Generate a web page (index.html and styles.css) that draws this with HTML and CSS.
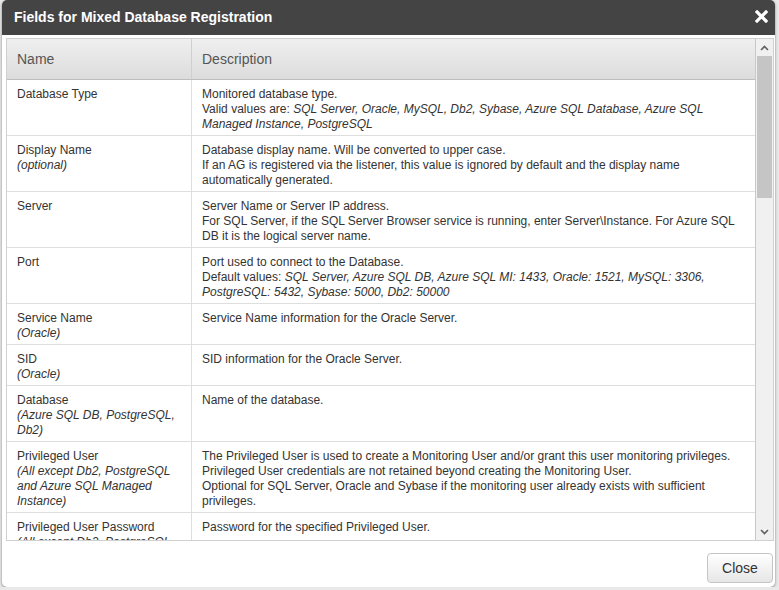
FILE: index.html
```html
<!DOCTYPE html>
<html>
  <head>
    <meta charset="utf-8" />
    <title>Fields for Mixed Database Registration</title>
    <link rel="stylesheet" href="styles.css">
  </head>
  <body>
    <div class="dialog">
      <div class="titlebar">
        <span class="title">Fields for Mixed Database Registration</span>
        <span class="close-x">
          <svg width="13" height="13" viewBox="0 0 13 13">
            <path d="M2 2 L11 11 M11 2 L2 11" stroke="#fff" stroke-width="3.2" stroke-linecap="square" />
          </svg>
        </span>
      </div>
      <div class="body">
        <div class="scroller">
          <div class="viewport">
            <table class="fields">
              <tr>
                <th class="col-name">Name</th>
                <th>Description</th>
              </tr>
              <tr>
                <td>Database Type</td>
                <td>Monitored database type.<br />Valid values are: <i>SQL Server, Oracle, MySQL, Db2, Sybase, Azure SQL Database, Azure SQL Managed Instance, PostgreSQL</i></td>
              </tr>
              <tr>
                <td>Display Name<br /><i>(optional)</i></td>
                <td>Database display name. Will be converted to upper case.<br />If an AG is registered via the listener, this value is ignored by default and the display name automatically generated.</td>
              </tr>
              <tr>
                <td>Server</td>
                <td>Server Name or Server IP address.<br />For SQL Server, if the SQL Server Browser service is running, enter Server\Instance. For Azure SQL DB it is the logical server name.</td>
              </tr>
              <tr>
                <td>Port</td>
                <td>Port used to connect to the Database.<br />Default values: <i>SQL Server, Azure SQL DB, Azure SQL MI: 1433, Oracle: 1521, MySQL: 3306, PostgreSQL: 5432, Sybase: 5000, Db2: 50000</i></td>
              </tr>
              <tr>
                <td>Service Name<br /><i>(Oracle)</i></td>
                <td>Service Name information for the Oracle Server.</td>
              </tr>
              <tr>
                <td>SID<br /><i>(Oracle)</i></td>
                <td>SID information for the Oracle Server.</td>
              </tr>
              <tr>
                <td>Database<br /><i>(Azure SQL DB, PostgreSQL, Db2)</i></td>
                <td>Name of the database.</td>
              </tr>
              <tr>
                <td>Privileged User<br /><i>(All except Db2, PostgreSQL and Azure SQL Managed Instance)</i></td>
                <td>The Privileged User is used to create a Monitoring User and/or grant this user monitoring privileges.<br />Privileged User credentials are not retained beyond creating the Monitoring User.<br />Optional for SQL Server, Oracle and Sybase if the monitoring user already exists with sufficient privileges.</td>
              </tr>
              <tr>
                <td>Privileged User Password<br /><i>(All except Db2, PostgreSQL and Azure SQL Managed Instance)</i></td>
                <td>Password for the specified Privileged User.</td>
              </tr>
              <tr>
                <td>Monitoring User</td>
                <td>The user that will be used to monitor the database.</td>
              </tr>
            </table>
          </div>
          <div class="scrollbar">
            <div class="sb-btn">
              <svg width="9" height="6" viewBox="0 0 9 6"><path d="M1 5 L4.5 1.5 L8 5" fill="none" stroke="#606060" stroke-width="1.6" /></svg>
            </div>
            <div class="sb-thumb"></div>
            <div class="sb-track"></div>
            <div class="sb-btn">
              <svg width="9" height="6" viewBox="0 0 9 6"><path d="M1 1 L4.5 4.5 L8 1" fill="none" stroke="#606060" stroke-width="1.6" /></svg>
            </div>
          </div>
        </div>
      </div>
      <div class="footer">
        <button class="btn">Close</button>
      </div>
    </div>
  </body>
</html>
```

FILE: styles.css
```css
html, body {
  margin: 0;
  padding: 0;
}
body {
  background-color: #e9e9e9;
  font-family: "Liberation Sans", Arial, sans-serif;
  color: #333;
}
.dialog {
  width: 773px;
  height: 587px;
  margin-left: 2px;
  background-color: #fff;
  border-radius: 5px;
  box-shadow: 0 1px 3px rgba(0, 0, 0, 0.45);
  display: flex;
  flex-direction: column;
  overflow: hidden;
}
.titlebar {
  height: 35px;
  flex: none;
  background-color: #444;
  display: flex;
  align-items: center;
  justify-content: space-between;
  padding: 0 7px 0 12px;
}
.title {
  color: #fff;
  font-size: 14px;
  font-weight: bold;
  padding-bottom: 1px;
}
.close-x {
  display: flex;
  width: 13px;
  height: 13px;
  margin-bottom: 3px;
  cursor: pointer;
}
.body {
  padding: 3px 1px 0 4px;
}
.scroller {
  height: 501px;
  border: 1px solid #d0d0d0;
  display: flex;
}
.viewport {
  width: 749px;
  overflow: hidden;
  border-right: 1px solid #c8c8c8;
}
.fields {
  width: 749px;
  border-collapse: collapse;
  font-size: 12px;
  line-height: 15px;
}
.fields th {
  height: 40px;
  padding: 0 10px;
  text-align: left;
  font-weight: normal;
  font-size: 14px;
  color: #555;
  background: linear-gradient(#efefef, #dcdcdc);
  border-bottom: 1px solid #bdbdbd;
  border-right: 1px solid #cfcfcf;
}
.fields .col-name {
  width: 164px;
}
.fields td {
  vertical-align: top;
  padding: 7px 8px 3px 10px;
  border-bottom: 1px solid #dedede;
  border-right: 1px solid #dedede;
}
.scrollbar {
  width: 17px;
  display: flex;
  flex-direction: column;
  background-color: #f0f0f0;
}
.sb-btn {
  height: 17px;
  flex: none;
  display: flex;
  align-items: center;
  justify-content: center;
}
.sb-thumb {
  height: 142px;
  flex: none;
  margin: 0 1px;
  background-color: #c5c5c5;
}
.sb-track {
  flex: 1;
}
.footer {
  flex: 1;
  display: flex;
  justify-content: flex-end;
  align-items: flex-start;
  padding: 12px 2px 0 0;
}
.btn {
  width: 66px;
  height: 30px;
  font-family: "Liberation Sans", Arial, sans-serif;
  font-size: 14px;
  color: #333;
  border: 1px solid #c4c4c4;
  border-radius: 4px;
  background: linear-gradient(#ffffff, #e6e6e6);
  cursor: pointer;
}
.btn:hover {
  background: #e6e6e6;
}
```
